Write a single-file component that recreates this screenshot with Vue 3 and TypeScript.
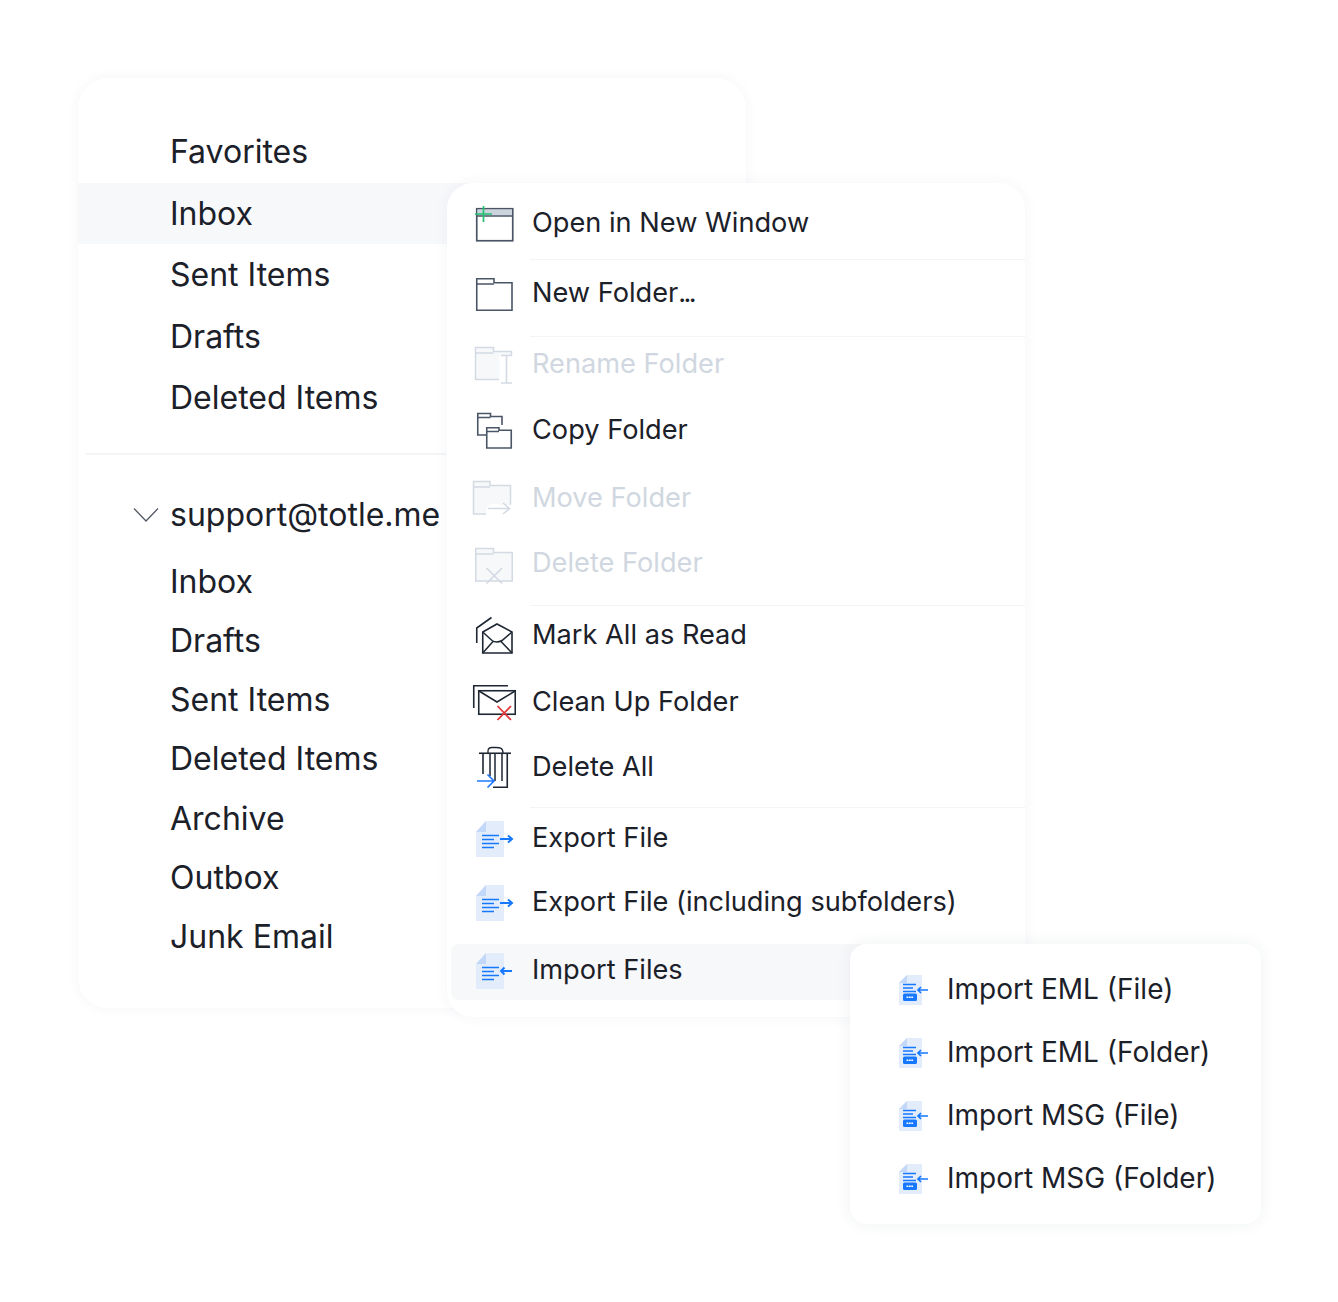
<script setup lang="ts">
import { computed } from 'vue'

const topFolders = ['Inbox', 'Sent Items', 'Drafts', 'Deleted Items']
const accountFolders = ['Inbox', 'Drafts', 'Sent Items', 'Deleted Items', 'Archive', 'Outbox', 'Junk Email']

type Row = { label: string; icon: string; cy: number; dim?: boolean; hover?: boolean; sep?: number; dots?: boolean }
const raw: Row[] = [
  { label: 'Open in New Window', icon: 'window', cy: 223 },
  { label: 'New Folder', icon: 'folder', cy: 293, sep: 259, dots: true },
  { label: 'Rename Folder', icon: 'rename', cy: 364, dim: true, sep: 336 },
  { label: 'Copy Folder', icon: 'copy', cy: 430 },
  { label: 'Move Folder', icon: 'move', cy: 498, dim: true },
  { label: 'Delete Folder', icon: 'delete', cy: 563, dim: true },
  { label: 'Mark All as Read', icon: 'read', cy: 635, sep: 605 },
  { label: 'Clean Up Folder', icon: 'clean', cy: 702 },
  { label: 'Delete All', icon: 'trash', cy: 767 },
  { label: 'Export File', icon: 'export', cy: 838, sep: 807 },
  { label: 'Export File (including subfolders)', icon: 'export', cy: 902 },
  { label: 'Import Files', icon: 'import', cy: 972, hover: true },
]

const MENU_TOP = 183
const ROW_H = 56
const rows = computed(() => {
  let y = MENU_TOP
  return raw.map((r) => {
    let sepGap = 0
    if (r.sep) {
      sepGap = r.sep - y
      y = r.sep + 1
    }
    const top = r.cy - ROW_H / 2
    const gap = top - y
    y = top + ROW_H
    return { ...r, sepGap, gap }
  })
})

const subRows = ['Import EML (File)', 'Import EML (Folder)', 'Import MSG (File)', 'Import MSG (Folder)']
</script>

<template>
  <div class="stage">
    <section class="panel">
      <div class="fav">Favorites</div>
      <div v-for="(f, i) in topFolders" :key="f" class="fav" :class="{ active: i === 0 }">{{ f }}</div>
      <div class="rule"></div>
      <div class="account">
        <svg class="chev" width="26" height="16" viewBox="0 0 26 16"><path d="M1 1.500 13 14 25 1.500" fill="none" stroke="#555b66" stroke-width="1.300" /></svg>
        <span>support@totle.me</span>
      </div>
      <div v-for="f in accountFolders" :key="f" class="sub-folder">{{ f }}</div>
    </section>

    <section class="menu">
      <template v-for="r in rows" :key="r.label">
        <div v-if="r.sep" class="menu-rule" :style="{ marginTop: r.sepGap + 'px' }"></div>
        <div class="row" :class="{ dim: r.dim, hover: r.hover }" :style="{ marginTop: r.gap + 'px' }">
          <svg class="ico" width="44" height="44" viewBox="0 0 44 44" fill="none">
            <template v-if="r.icon === 'window'">
              <rect x="4.750" y="7.750" width="36" height="32" fill="#fff" stroke="#4a5565" stroke-width="1.700" />
              <rect x="5.500" y="8.500" width="34.500" height="6" fill="#cbd3dd" />
              <path d="M4.500 15h36" stroke="#4a5565" stroke-width="1.300" />
              <path d="M3 13h17M11.500 5v16" stroke="#22c273" stroke-width="1.700" />
            </template>
            <template v-else-if="r.icon === 'folder'">
              <path d="M4.750 13V7.750H22V12M22 11.750h18v27.500H4.750V13H22" stroke="#4a5565" stroke-width="1.600" />
            </template>
            <template v-else-if="r.icon === 'rename'">
              <path d="M3.500 37.500V5.500H21.500V9.500H39.500V13H27.500V37.500Z" fill="#f6f8fa" />
              <path d="M3.500 11V5.500H21.500V10M21.500 9.500H39.500V14M27 37.500H3.500V11H21.500" stroke="#d3dae3" stroke-width="1.500" />
              <path d="M29 13.500h11M34.500 13.500v27M29 41h11" stroke="#d3dae3" stroke-width="1.600" />
            </template>
            <template v-else-if="r.icon === 'copy'">
              <path d="M5.750 10V5.500H18.500V9M18.500 8.500H30V17M14 27H5.750V9.500H18.500" stroke="#4a5565" stroke-width="1.600" />
              <path d="M14.750 24V19.750H27V23M27 22.250H39.250V40H14.750V23.500H27" fill="#fff" stroke="#4a5565" stroke-width="1.600" />
            </template>
            <template v-else-if="r.icon === 'move'">
              <path d="M1.500 38V5.500H18V9.500H38.500V38Z" fill="#f6f8fa" stroke="#d3dae3" stroke-width="1.500" />
              <path d="M1.500 11H18" stroke="#d3dae3" stroke-width="1.500" />
              <path d="M14 39C13 31 18 27 24 28C30 29 34 30 42 28V39Z" fill="#fff" />
              <path d="M16 32.500H37M31 27l6.500 5.500L31 38" stroke="#d3dae3" stroke-width="1.600" />
            </template>
            <template v-else-if="r.icon === 'delete'">
              <path d="M3.750 40V7.500H21.500V11.500H40.250V40Z" fill="#f6f8fa" stroke="#d3dae3" stroke-width="1.500" />
              <path d="M3.750 13H21.500" stroke="#d3dae3" stroke-width="1.500" />
              <path d="M14.500 27 30 42.500M30 27 14.500 42.500" stroke="#d3dae3" stroke-width="1.600" />
            </template>
            <template v-else-if="r.icon === 'read'">
              <path d="M4.750 30V15L19.500 4.500" stroke="#1f2733" stroke-width="1.600" />
              <path d="M10.750 40V19L25 11l15 8V40Z" fill="#fff" stroke="#1f2733" stroke-width="1.600" />
              <path d="M10.750 19 20 27.500c3 2 6 2 10 0L40 19M10.750 40 21 28.500M40 40 29 28.500" stroke="#1f2733" stroke-width="1.500" />
            </template>
            <template v-else-if="r.icon === 'clean'">
              <path d="M1.750 28V5.750H36" stroke="#1f2733" stroke-width="1.600" />
              <rect x="6.750" y="10.750" width="36.500" height="23.500" fill="#fff" stroke="#1f2733" stroke-width="1.600" />
              <path d="M7 11 25 22 43 11" stroke="#1f2733" stroke-width="1.500" />
              <path d="M25.500 26 39 40M39 26 25.500 40" stroke="#e2363a" stroke-width="1.800" />
            </template>
            <template v-else-if="r.icon === 'trash'">
              <path d="M7 8.250H39" stroke="#1f2733" stroke-width="1.600" />
              <path d="M16 8V6c0-3 2-3.500 4-3.500h4c3 0 7 0 7 5.500" stroke="#1f2733" stroke-width="1.300" />
              <path d="M11 8V29M35.250 8V42.250H21" stroke="#1f2733" stroke-width="1.600" />
              <path d="M18 9V31M23 9V36M30 9V36" stroke="#1f2733" stroke-width="1.500" />
              <path d="M5 36H21M15.500 29.500 22 36l-6.500 6.500" stroke="#1f78ff" stroke-width="1.600" />
            </template>
            <template v-else>
              <path d="M4 16 14 5H32V41H4Z" fill="#e2ecfb" />
              <path d="M4 16 14 5V16Z" fill="#c3d8f8" />
              <path d="M10 19.500H27M10 23.500H22M10 27.500H27M10 31.500H22" stroke="#1677ff" stroke-width="1.500" />
              <path v-if="r.icon === 'export'" d="M28 23H39M36 19.500l4 3.500-4 3.500" stroke="#1677ff" stroke-width="2" />
              <path v-else d="M29 23H40M32.500 19.500 29 23l3.500 3.500" stroke="#1677ff" stroke-width="2" />
            </template>
          </svg>
          <span>{{ r.label }}<i v-if="r.dots" class="dots">...</i></span>
        </div>
      </template>
    </section>

    <section class="submenu">
      <div v-for="s in subRows" :key="s" class="sub-row">
        <svg width="32" height="32" viewBox="0 0 32 32" fill="none">
          <path d="M1 9 9 1H24V31H1Z" fill="#e2ecfb" />
          <path d="M1 9 9 1V9Z" fill="#c3d8f8" />
          <path d="M5 10.500H18M5 14H15M5 17.500H18" stroke="#1677ff" stroke-width="1.300" />
          <rect x="5" y="19.500" width="14" height="7.500" rx="1.500" fill="#1677ff" />
          <path d="M8.500 23.300H15.500" stroke="#fff" stroke-width="1.600" stroke-dasharray="1.800 .6" />
          <path d="M20 16H30M23 13l-3 3 3 3" stroke="#1677ff" stroke-width="1.700" />
        </svg>
        <span>{{ s }}</span>
      </div>
    </section>
  </div>
</template>

<style scoped>
.stage {
  position: relative;
  width: 1338px;
  height: 1302px;
  padding: 78px 0 0 78px;
  box-sizing: border-box;
  background: #fff;
  font-family: Inter, "Liberation Sans", sans-serif;
  color: #1b2029;
  overflow: hidden;
}
.panel {
  width: 668px;
  height: 930px;
  box-sizing: border-box;
  padding-top: 43px;
  border-radius: 30px;
  background: #fff;
  box-shadow: 0 0 14px rgba(30, 50, 90, 0.045);
  font-size: 32px;
}
.fav {
  height: 61.500px;
  line-height: 61.500px;
  padding-left: 92px;
}
.active {
  background: #f7f8fa;
}
.rule {
  height: 2px;
  margin: 24px 0 0 8px;
  width: 360px;
  background: #f3f4f6;
}
.account {
  display: flex;
  align-items: center;
  height: 60px;
  margin-top: 30px;
  margin-bottom: 7px;
  padding-left: 55px;
  gap: 11px;
}
.chev {
  flex: none;
}
.sub-folder {
  height: 59.300px;
  line-height: 59.300px;
  padding-left: 92px;
}
.menu {
  position: absolute;
  left: 447px;
  top: 183px;
  width: 578px;
  height: 834px;
  border-radius: 26px;
  background: #fff;
  box-shadow: 0 0 14px rgba(30, 50, 90, 0.05);
}
.menu-rule {
  height: 1px;
  margin-left: 83px;
  background: #f2f4f6;
}
.row {
  display: flex;
  align-items: center;
  box-sizing: border-box;
  height: 56px;
  margin-left: 4px;
  padding-left: 21px;
  font-size: 27.200px;
  border-radius: 8px 0 0 8px;
}
.row span {
  padding-bottom: 2px;
}
.dots {
  font-style: normal;
  letter-spacing: -2.600px;
}
.ico {
  flex: none;
  margin-right: 16px;
}
.dim {
  color: #d0d7e0;
}
.hover {
  background: #f7f8fa;
  padding-bottom: 4px;
}
.submenu {
  position: absolute;
  left: 850px;
  top: 944px;
  width: 411px;
  height: 280px;
  box-sizing: border-box;
  padding-top: 13px;
  border-radius: 16px;
  background: #fff;
  box-shadow: 0 0 16px rgba(30, 50, 90, 0.07);
}
.sub-row {
  display: flex;
  align-items: center;
  height: 63px;
  padding-left: 48px;
  gap: 17px;
  font-size: 28px;
}
.sub-row svg {
  flex: none;
  margin-top: 3px;
}
</style>
